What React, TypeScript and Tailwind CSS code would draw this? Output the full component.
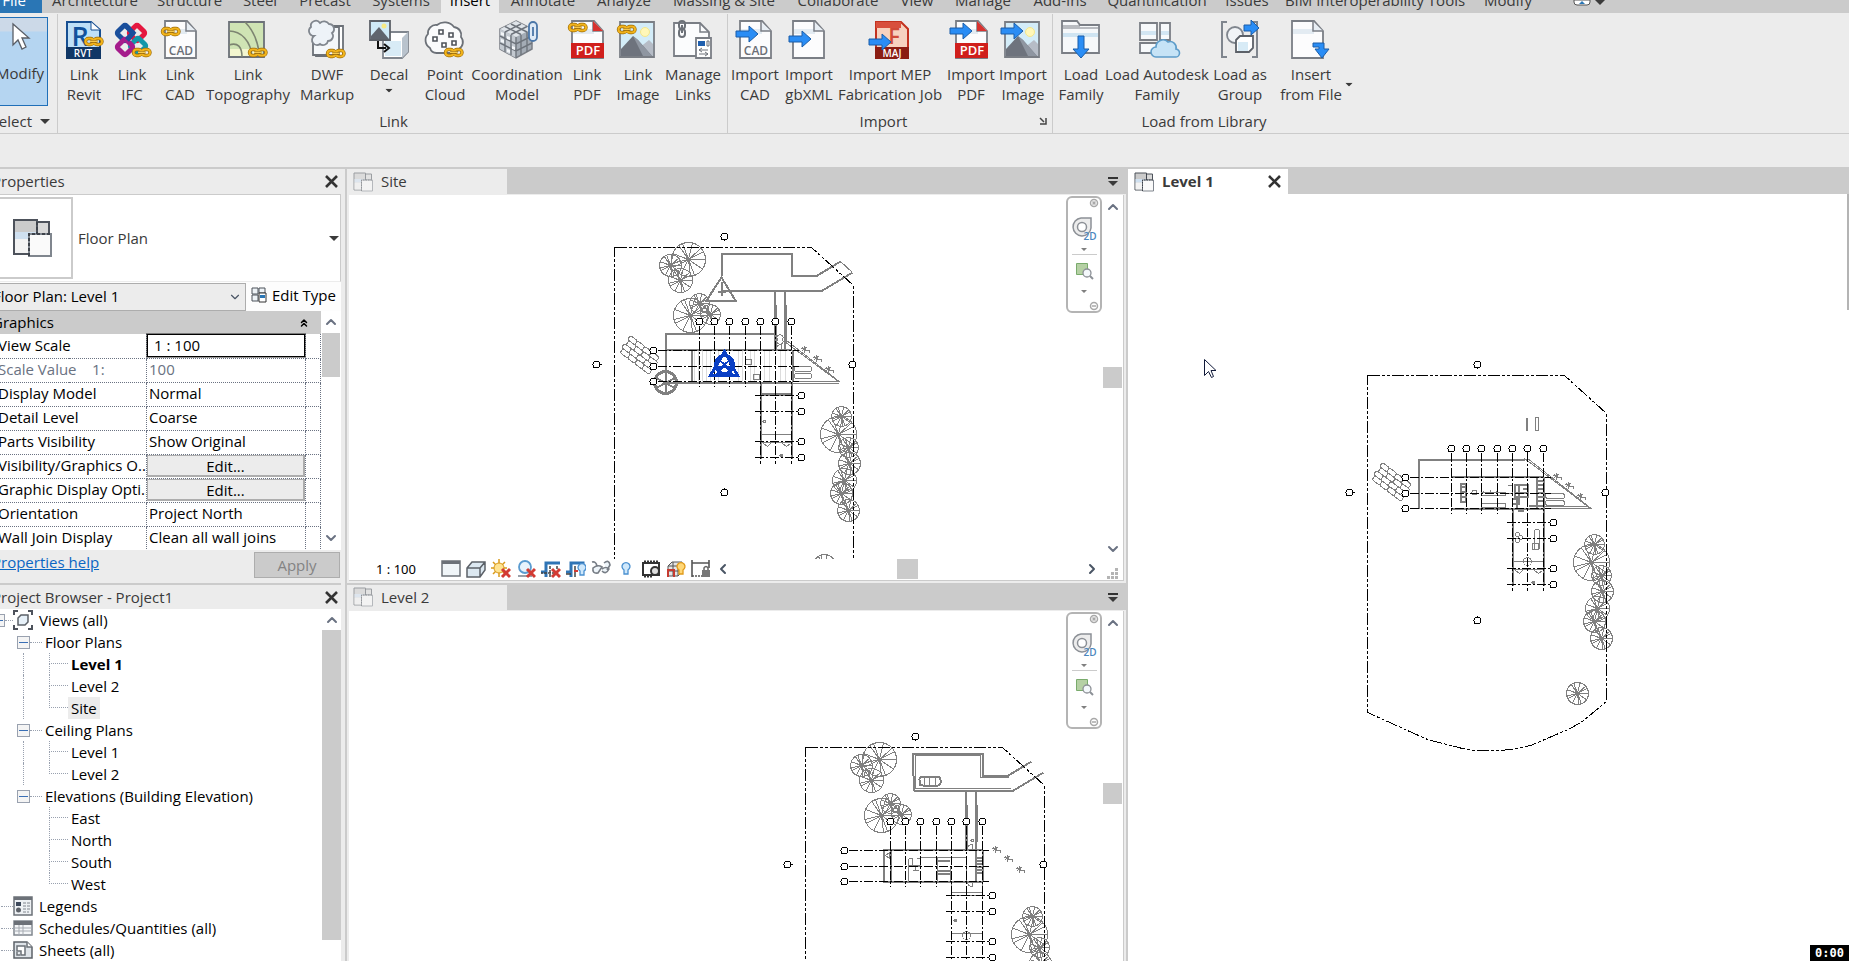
import type { ReactNode } from "react";
import { ChevronDown, ChevronLeft, ChevronRight, ChevronUp, ChevronsUp } from "lucide-react";
import { clsx } from "clsx";

/* ---------- shared icon parts ---------- */

function Caret({ className }: { className?: string }) {
  return (
    <svg viewBox="0 0 10 5" className={clsx("h-[5px] w-[10px] shrink-0", className)}>
      <path d="M0 0h10L5 5z" fill="currentColor" />
    </svg>
  );
}

function CloseIcon() {
  return (
    <svg viewBox="0 0 13 13" className="h-[13px] w-[13px]">
      <path d="M1 1l11 11M12 1L1 12" stroke="#333" strokeWidth="2.600" />
    </svg>
  );
}

function Chain({ x, y }: { x: number; y: number }) {
  return (
    <g transform={`translate(${x} ${y})`} fill="none">
      <rect x="1.5" y="1.5" width="8" height="6" rx="3" stroke="#9a6a08" strokeWidth="3.4" />
      <rect x="10" y="1.5" width="8" height="6" rx="3" stroke="#9a6a08" strokeWidth="3.4" />
      <rect x="1.5" y="1.5" width="8" height="6" rx="3" stroke="#f2b41c" strokeWidth="2" />
      <rect x="10" y="1.5" width="8" height="6" rx="3" stroke="#f2b41c" strokeWidth="2" />
      <path d="M6 4.500h7.500" stroke="#9a6a08" strokeWidth="2.600" />
      <path d="M6 4.300h7.500" stroke="#ffd45a" strokeWidth="1.200" />
    </g>
  );
}

function Arrow({ x, y, turn = 0 }: { x: number; y: number; turn?: number }) {
  return (
    <path
      transform={`translate(${x} ${y}) rotate(${turn})`}
      d="M0-3h13v-5l9 8-9 8v-5H0z"
      fill="#2a8df5"
      stroke="#1a5da8"
    />
  );
}

function Sheet({ x = 5, children }: { x?: number; children?: ReactNode }) {
  return (
    <g transform={`translate(${x} 1)`}>
      <path d="M1 1h22l9 10v27H1z" fill="#fcfcfd" stroke="#7a7e85" strokeWidth="1.800" />
      <path d="M2 9h21v5H2z" fill="#e3ebf2" />
      <path d="M22 1.500V11h10" fill="#e8eef4" stroke="#7a7e85" strokeWidth="1.500" />
      {children}
    </g>
  );
}

function IconText({ x, y, size, fill, children }: { x: number; y: number; size: number; fill: string; children: string }) {
  return (
    <text x={x} y={y} fontSize={size} fill={fill} textAnchor="middle" fontWeight="600" fontFamily="Open Sans, sans-serif">
      {children}
    </text>
  );
}

function PdfSheet() {
  return (
    <Sheet>
      <path d="M22 1v10h10z" fill="#d8322f" />
      <path d="M0 23h33v15H0z" fill="#d01f1c" />
      <IconText x={17} y={35} size={13} fill="#fff">PDF</IconText>
    </Sheet>
  );
}

function Photo() {
  return (
    <g>
      <path d="M3 3h34v35H3z" fill="#d3ecf8" stroke="#7a7e85" strokeWidth="1.800" />
      <circle cx="28" cy="13" r="4.500" fill="#fff7b8" stroke="#f4e68c" />
      <path d="M22 29l10-8 4 4v12H22z" fill="#b6bcc6" />
      <path d="M4 30l12-13 5 4 14 16H4z" fill="#6e737d" />
      <path d="M16 17l5 4 14 16h-9z" fill="#8f96a1" />
    </g>
  );
}

function Folder() {
  return (
    <g stroke="#7a7e85" strokeWidth="1.800">
      <path d="M2 34V2h15l3 4h19v28z" fill="#f6f8fa" />
      <path d="M3 9h35M2 7h18" strokeWidth="1.200" />
      <path d="M3 14h35v4H3z" fill="#cfe4f2" stroke="none" />
    </g>
  );
}

/* ---------- ribbon icons, each drawn on a 42 x 42 board ---------- */

const icons = {
  modify: <path d="M14 6v21l5-5 4 9 4-2-4-9h7z" fill="#fff" stroke="#5a5e66" strokeWidth="1.300" />,
  revit: (
    <>
      <path d="M4 3h24l9 8v28H4z" fill="#bfe0f7" stroke="#174f92" strokeWidth="2" />
      <path d="M28 3v8h9" fill="#fff" stroke="#174f92" />
      <path d="M3 28h35v12H3z" fill="#103766" />
      <IconText x={17} y={27} size={27} fill="#12529c">R</IconText>
      <IconText x={20} y={38} size={10} fill="#fff">RVT</IconText>
      <Chain x={21} y={18} />
    </>
  ),
  ifc: (
    <>
      <g fill="none" strokeWidth="5">
        <rect x="-6" y="-6" width="12" height="12" rx="2" transform="translate(14 14) rotate(45)" stroke="#1a4f9c" />
        <rect x="-6" y="-6" width="12" height="12" rx="2" transform="translate(26 14) rotate(45)" stroke="#e5173f" />
        <rect x="-6" y="-6" width="12" height="12" rx="2" transform="translate(27 27) rotate(45)" stroke="#1297a8" />
        <rect x="-6" y="-6" width="12" height="12" rx="2" transform="translate(14 28) rotate(45)" stroke="#a51c8c" />
        <path d="M14 6l8 8-6 7" stroke="#1a4f9c" />
      </g>
      <Chain x={21} y={29} />
    </>
  ),
  linkCad: (
    <>
      <Sheet>
        <IconText x={17} y={35} size={12} fill="#6b6f77">CAD</IconText>
      </Sheet>
      <Chain x={2} y={8} />
    </>
  ),
  topo: (
    <>
      <path d="M2 3h35v35H2z" fill="#cfe4b4" stroke="#6c7178" strokeWidth="1.800" />
      <path d="M3 30h30v7H3z" fill="#f3f6cf" />
      <g fill="none" stroke="#7d8571" strokeWidth="1.600">
        <path d="M2 12c12 0 22 10 23 26M18 3c6 6 12 16 14 30M2 26c9-3 13 2 13 12" />
      </g>
      <Chain x={21} y={29} />
    </>
  ),
  dwf: (
    <>
      <path d="M10 7h27v30H10z" fill="#fff" stroke="#6c7178" strokeWidth="1.800" />
      <path d="M7 8h26v28H7z" fill="#f4f7fa" stroke="#6c7178" strokeWidth="1.800" />
      <path
        d="M8 17a5 5 0 0 1-3-9 5 5 0 0 1 9-4 6 6 0 0 1 9 1 5 5 0 0 1 3 9 5 5 0 0 1-4 8 5 5 0 0 1-8 3 5 5 0 0 1-7-1 5 5 0 0 1 1-7z"
        fill="#eef3f8"
        stroke="#80868e"
        strokeWidth="1.800"
      />
      <Chain x={20} y={30} />
    </>
  ),
  decal: (
    <>
      <path d="M15 19l6-6h19v20l-6 6H15z" fill="#fff" stroke="#80868e" strokeWidth="1.800" />
      <path d="M34 19l6-6v20l-6 6z" fill="#b9c3cd" />
      <path d="M17 22h16v15H17z" fill="#d8ebf6" />
      <path d="M2 2h20v19H2z" fill="#cfeaf7" stroke="#5c6168" strokeWidth="1.800" />
      <path d="M3 17l8-9 10 12H3z" fill="#5f656e" />
      <circle cx="16" cy="7" r="2.500" fill="#f7ea84" />
      <path d="M10 22v7h8M16 25l5 4-5 4" fill="none" stroke="#111" strokeWidth="2" />
    </>
  ),
  cloud: (
    <>
      <path
        d="M6 29a9 9 0 0 1-2-14A8 8 0 0 1 13 6a12 12 0 0 1 17 2 8 8 0 0 1 7 10 8 8 0 0 1-2 12 8 8 0 0 1-9 4H13a7 7 0 0 1-7-5z"
        fill="#fafbfc"
        stroke="#6c7178"
        strokeWidth="1.800"
      />
      <g fill="#fff" stroke="#4f545b" strokeWidth="1.600">
        <path d="M15 11h4v4h-4zM25 14h4v4h-4zM9 18h4v4H9zM18 24h4v4h-4zM28 22h4v4h-4z" />
      </g>
      <Chain x={20} y={29} />
    </>
  ),
  coordination: (
    <>
      <path d="M20 2l16 8v20l-16 9L4 30V10z" fill="#a4acb5" stroke="#7a7e85" strokeWidth="1.500" />
      <path d="M20 2l16 8-16 8-16-8z" fill="#dfe4e9" />
      <path d="M20 18v21L4 30V10z" fill="#c3c9d0" />
      <g fill="none" stroke="#6e747c" strokeWidth="1.400">
        <path d="M4 17l16 8 16-8M4 24l16 8 16-8M9 13v20M15 16v20M25 16v20M31 13v20M20 18v21M9 7.500l16 8M15 5l16 8M31 7.500l-16 8M25 5L9 13" />
      </g>
      <g fill="#f2f5f8">
        <path d="M5 13l3 1v3l-3-1zM11 17l3 1v3l-3-1zM16 27l3 1v3l-3-1zM5 20l3 1v3l-3-1zM11 30l3 1v3l-3-1z" />
      </g>
      <rect x="33" y="3" width="8" height="19" rx="4" fill="#dfeaf6" stroke="#4c77a8" strokeWidth="1.800" />
      <path d="M37 8v9" stroke="#4c77a8" strokeWidth="1.800" />
    </>
  ),
  linkPdf: (
    <>
      <PdfSheet />
      <Chain x={2} y={4} />
    </>
  ),
  linkImage: (
    <>
      <Photo />
      <Chain x={0} y={6} />
    </>
  ),
  manage: (
    <>
      <path d="M2 4h26l9 9v24H2z" fill="#fbfcfd" stroke="#7a7e85" strokeWidth="1.800" />
      <path d="M28 4v9h9" fill="none" stroke="#7a7e85" strokeWidth="1.500" />
      <g fill="none" stroke="#6c7178" strokeWidth="2">
        <rect x="7" y="2" width="6" height="8" rx="3" />
        <rect x="7" y="10" width="6" height="8" rx="3" />
        <path d="M10 6v8" />
      </g>
      <path d="M24 19h15v20H24z" fill="#fff" stroke="#7a7e85" strokeWidth="1.800" />
      <path d="M26 22h7v5h-7z" fill="#1f5fae" />
      <path d="M35 22h2v5h-2zM27 31h9M27 35h9M30 29l-3 2 3 2M33 33l3 2-3 2" fill="none" stroke="#6c7178" />
    </>
  ),
  importCad: (
    <>
      <Sheet>
        <IconText x={17} y={35} size={12} fill="#6b6f77">CAD</IconText>
      </Sheet>
      <Arrow x={2} y={15} />
    </>
  ),
  importXml: (
    <>
      <Sheet x={4} />
      <Arrow x={1} y={20} />
    </>
  ),
  importMep: (
    <>
      <path d="M7 3h25l7 7v29H7z" fill="#f7d2bf" stroke="#c3321f" strokeWidth="2" />
      <path d="M7 3h25v6H7z" fill="#d8503d" />
      <IconText x={25} y={25} size={22} fill="#d04a38">F</IconText>
      <path d="M6 28h34v12H6z" fill="#8b1d12" />
      <IconText x={23} y={38} size={10} fill="#fff">MAJ</IconText>
      <Arrow x={0} y={23} />
    </>
  ),
  importPdf: (
    <>
      <PdfSheet />
      <Arrow x={0} y={12} />
    </>
  ),
  importImage: (
    <>
      <Photo />
      <Arrow x={-1} y={12} />
    </>
  ),
  loadFamily: (
    <>
      <Folder />
      <Arrow x={21} y={17} turn={90} />
    </>
  ),
  loadAutodesk: (
    <>
      <g fill="#f7f9fb" stroke="#7a7e85" strokeWidth="1.800">
        <path d="M4 4h17v17H4zM24 4h10v17H24zM4 24h17v10H4z" />
      </g>
      <path d="M5 12h15v4H5zM25 12h8v4h-8z" fill="#d3e6f3" />
      <path
        d="M20 38a5 5 0 0 1 0-10 7 7 0 0 1 12-5 6 6 0 0 1 8 7 4 4 0 0 1-1 8z"
        fill="#c6e3f6"
        stroke="#5d9cc9"
        strokeWidth="1.600"
      />
    </>
  ),
  loadGroup: (
    <>
      <g fill="none" stroke="#80868e" strokeWidth="2">
        <path d="M8 3H3v35h5M33 3h5v35h-5" />
      </g>
      <circle cx="16" cy="16" r="8" fill="#f1f4f7" stroke="#80868e" strokeWidth="1.800" />
      <path d="M17 21l4-4h13v12l-4 4H17z" fill="#fff" stroke="#5c6168" strokeWidth="1.800" />
      <path d="M19 23h10v9H19z" fill="#d8ebf6" />
      <path d="M25 6h7V1l8 8-8 7v-4h-7z" fill="#2a8df5" stroke="#1a5da8" />
    </>
  ),
  insertFile: (
    <>
      <Sheet x={1} />
      <path d="M23 24h11v6h5l-7 9-7-9h4v-2h-6z" fill="#2a8df5" stroke="#1a5da8" />
    </>
  ),
};

type IconName = keyof typeof icons;

interface Tool {
  icon: IconName;
  lines: string[];
  width: string;
}

const linkTools: Tool[] = [
  { icon: "revit", lines: ["Link", "Revit"], width: "w-[48px]" },
  { icon: "ifc", lines: ["Link", "IFC"], width: "w-[48px]" },
  { icon: "linkCad", lines: ["Link", "CAD"], width: "w-[48px]" },
  { icon: "topo", lines: ["Link", "Topography"], width: "w-[88px]" },
  { icon: "dwf", lines: ["DWF", "Markup"], width: "w-[70px]" },
  { icon: "decal", lines: ["Decal"], width: "w-[54px]" },
  { icon: "cloud", lines: ["Point", "Cloud"], width: "w-[58px]" },
  { icon: "coordination", lines: ["Coordination", "Model"], width: "w-[86px]" },
  { icon: "linkPdf", lines: ["Link", "PDF"], width: "w-[54px]" },
  { icon: "linkImage", lines: ["Link", "Image"], width: "w-[48px]" },
  { icon: "manage", lines: ["Manage", "Links"], width: "w-[62px]" },
];

const importTools: Tool[] = [
  { icon: "importCad", lines: ["Import", "CAD"], width: "w-[54px]" },
  { icon: "importXml", lines: ["Import", "gbXML"], width: "w-[54px]" },
  { icon: "importMep", lines: ["Import MEP", "Fabrication Job"], width: "w-[108px]" },
  { icon: "importPdf", lines: ["Import", "PDF"], width: "w-[54px]" },
  { icon: "importImage", lines: ["Import", "Image"], width: "w-[50px]" },
];

const libraryTools: Tool[] = [
  { icon: "loadFamily", lines: ["Load", "Family"], width: "w-[48px]" },
  { icon: "loadAutodesk", lines: ["Load Autodesk", "Family"], width: "w-[104px]" },
  { icon: "loadGroup", lines: ["Load as", "Group"], width: "w-[62px]" },
  { icon: "insertFile", lines: ["Insert", "from File"], width: "w-[80px]" },
];

const tabs = [
  { name: "Architecture", width: "w-[106px]" },
  { name: "Structure", width: "w-[83px]" },
  { name: "Steel", width: "w-[58px]" },
  { name: "Precast", width: "w-[72px]" },
  { name: "Systems", width: "w-[80px]" },
  { name: "Insert", width: "w-[58px]" },
  { name: "Annotate", width: "w-[88px]" },
  { name: "Analyze", width: "w-[74px]" },
  { name: "Massing & Site", width: "w-[126px]" },
  { name: "Collaborate", width: "w-[102px]" },
  { name: "View", width: "w-[56px]" },
  { name: "Manage", width: "w-[76px]" },
  { name: "Add-Ins", width: "w-[78px]" },
  { name: "Quantification", width: "w-[116px]" },
  { name: "Issues", width: "w-[64px]" },
  { name: "BIM Interoperability Tools", width: "w-[192px]" },
  { name: "Modify", width: "w-[74px]" },
];

function TabStrip() {
  return (
    <nav className="flex h-[13px] shrink-0 items-end overflow-hidden bg-[#cbcbcb] text-[15px]">
      <button className="w-[42px] shrink-0 bg-[#2a76b5] pb-[3px] pr-4 text-right leading-5 text-white">File</button>
      {tabs.map((tab) => (
        <button
          key={tab.name}
          className={clsx(
            "shrink-0 whitespace-nowrap pb-[3px] text-center leading-5",
            tab.width,
            tab.name === "Insert" && "bg-[#ececec] text-black",
          )}
        >
          {tab.name}
        </button>
      ))}
      <span className="ml-7 flex h-[13px] items-start gap-1">
        <svg viewBox="0 0 18 6" className="h-[6px] w-[18px]">
          <path d="M1 0v2q0 3 3 3h10q3 0 3-3V0z" fill="#fff" stroke="#555" />
          <path d="M6 4l3-3 3 3z" fill="#2a76b5" />
        </svg>
        <Caret />
      </span>
    </nav>
  );
}

function ToolButton({ tool }: { tool: Tool }) {
  return (
    <button className={clsx("flex shrink-0 flex-col items-center pt-[5px] leading-5", tool.width)}>
      <svg viewBox="0 0 42 42" className="mb-[3px] h-[42px] w-[42px] overflow-visible">
        {icons[tool.icon]}
      </svg>
      <span className="flex items-center whitespace-nowrap">
        <span>
          {tool.lines.map((line) => (
            <span key={line} className="block">{line}</span>
          ))}
        </span>
        {tool.icon === "insertFile" && <Caret className="-mr-3 ml-[2px] scale-75" />}
      </span>
      {tool.icon === "decal" && <Caret className="mt-1 scale-75" />}
    </button>
  );
}

function ToolGroup({ name, tools, launcher, className }: { name: string; tools: Tool[]; launcher?: boolean; className?: string }) {
  return (
    <section className={clsx("flex flex-col justify-between", className)}>
      <div className="flex">
        {tools.map((tool) => (
          <ToolButton key={tool.icon} tool={tool} />
        ))}
      </div>
      <div className="flex h-[24px] items-center">
        <h2 className="flex-1 text-center leading-5">{name}</h2>
        {launcher && (
          <svg viewBox="0 0 8 8" className="mr-[5px] h-2 w-2">
            <path d="M1 1l4 4M7 1v6H1" fill="none" stroke="#444" strokeWidth="1.500" />
          </svg>
        )}
      </div>
    </section>
  );
}

function Ribbon() {
  return (
    <div className="border-b border-[#cbcbcb] pt-px">
      <div className="flex h-[119px] text-[15px] text-[#3a3a3a]">
        <section className="-ml-2 flex w-[66px] flex-col justify-between border-r border-[#cbcbcb]">
          <button className="mt-[3px] flex h-[89px] w-[56px] flex-col items-center border border-[#1f6fb8] bg-linear-to-b from-[#ccd9e8] from-15% to-[#b5d5f1] to-16% leading-5">
            <svg viewBox="0 0 42 42" className="mb-[3px] h-[42px] w-[42px]">
              {icons.modify}
            </svg>
            Modify
          </button>
          <div className="flex h-[24px] items-center justify-end gap-2 pr-[7px]">
            Select <Caret />
          </div>
        </section>
        <ToolGroup name="Link" tools={linkTools} className="w-[670px] border-r border-[#cbcbcb] pl-[2px]" />
        <ToolGroup name="Import" tools={importTools} launcher className="w-[325px] border-r border-[#cbcbcb]" />
        <ToolGroup name="Load from Library" tools={libraryTools} className="pl-[4px]" />
      </div>
    </div>
  );
}

/* ---------- left palettes ---------- */

function PlanIcon({ className, faded }: { className: string; faded?: boolean }) {
  return (
    <svg viewBox="0 0 40 40" className={clsx("shrink-0", className, faded && "opacity-50")}>
      <path d="M2 2h23v34H2z" fill="#cbcbcb" stroke="#4d525b" strokeWidth="2" />
      <path d="M3 14h21v7H3z" fill="#cfe0f0" />
      <path d="M3 21h21v14H3z" fill="#f3f3f3" />
      <path d="M25 4h12v12H25z" fill="#d9d9d9" stroke="#4d525b" strokeWidth="2" />
      <path d="M17 16h22v22H17z" fill="#fafafa" stroke="#80868e" strokeWidth="2" />
      <path d="M17 38V16h22M25 4v12" fill="none" stroke="#3d424a" strokeWidth="2" strokeDasharray="3 2" />
    </svg>
  );
}

function PanelHeader({ title, className }: { title: string; className?: string }) {
  return (
    <header className={clsx("flex shrink-0 items-center justify-between pr-[3px] text-[#3a3a3a]", className)}>
      <h2>{title}</h2>
      <button aria-label={`Close ${title}`}>
        <CloseIcon />
      </button>
    </header>
  );
}

const properties = [
  { name: "View Scale", value: "1 : 100", kind: "input" },
  { name: "Scale Value    1:", value: "100", kind: "muted" },
  { name: "Display Model", value: "Normal", kind: "text" },
  { name: "Detail Level", value: "Coarse", kind: "text" },
  { name: "Parts Visibility", value: "Show Original", kind: "text" },
  { name: "Visibility/Graphics O...", value: "Edit...", kind: "button" },
  { name: "Graphic Display Opti...", value: "Edit...", kind: "button" },
  { name: "Orientation", value: "Project North", kind: "text" },
  { name: "Wall Join Display", value: "Clean all wall joins", kind: "text" },
];

function PropertyValue({ name, value, kind }: { name: string; value: string; kind: string }) {
  if (kind === "input")
    return (
      <input
        aria-label={name}
        defaultValue={value}
        className="block h-[23px] w-full border border-black bg-white px-[6px] pb-[2px] outline-1 outline-black/40"
      />
    );
  if (kind === "button")
    return (
      <button aria-label={`Edit ${name}`} className="block h-[22px] w-full border border-r-2 border-b-2 border-[#adadad] bg-[#ececec] leading-[18px]">
        {value}
      </button>
    );
  return <span className="block px-[2px]">{value}</span>;
}

function Properties() {
  return (
    <section className="flex flex-col">
      <PanelHeader title="Properties" className="h-[25px]" />
      <div className="flex h-[88px] items-center border-y border-r border-[#cbcbcb] border-b-[#ececec] bg-white text-[#3a3a3a]">
        <div className="flex h-[82px] w-[81px] items-center justify-center border-2 border-l-0 border-[#cbcbcb]">
          <PlanIcon className="h-[40px] w-[40px]" />
        </div>
        <span className="flex-1 pl-[5px]">Floor Plan</span>
        <Caret className="mr-px" />
      </div>
      <div className="flex h-[29px] items-center bg-[#fdfdfd]">
        <div className="relative h-[28px] w-[254px]">
          <select aria-label="Instance" className="h-full w-full appearance-none border border-[#adadad] bg-[#ececec] pl-0">
            <option>Floor Plan: Level 1</option>
          </select>
          <ChevronDown size={14} className="absolute top-[7px] right-1 text-gray-600" />
        </div>
        <button className="flex items-center gap-[5px] pb-[3px] pl-[5px]">
          <svg viewBox="0 0 16 16" className="h-4 w-4">
            <path d="M1 1h6v6H1zM8 1h6v5H8zM1 8h6v6H1z" fill="#eef3f7" stroke="#4d525b" />
            <path d="M8 6h7v9H8z" fill="#fff" stroke="#333" />
            <path d="M9 8h5v3H9z" fill="#2a76b5" />
          </svg>
          Edit Type
        </button>
      </div>
      <div className="flex h-[239px] overflow-hidden bg-white">
        <table className="h-[239px] w-[329px] table-fixed border-collapse">
          <thead>
            <tr className="h-[23px] bg-[#cbcbcb] text-left leading-[20px]">
              <th colSpan={2} className="pb-[2px] font-normal">Graphics</th>
              <th className="w-[159px]" />
              <th className="w-[15px]">
                <ChevronsUp size={12} strokeWidth={3} className="-ml-2" />
              </th>
            </tr>
          </thead>
          <tbody>
            {properties.map((row) => (
              <tr key={row.name} className={clsx("h-[24px] leading-[20px]", row.kind === "muted" && "text-gray-500")}>
                <th
                  colSpan={2}
                  className="overflow-hidden border-r border-b border-dotted border-gray-500 pb-[2px] pl-[6px] text-left font-normal whitespace-pre"
                >
                  {row.name}
                </th>
                <td className={clsx("border-r border-b border-dotted border-gray-500", row.kind === "text" || row.kind === "muted" ? "pb-[2px]" : "p-0")}>
                  <PropertyValue {...row} />
                </td>
                <td className="border-r border-b border-dotted border-gray-500" />
              </tr>
            ))}
          </tbody>
        </table>
        <div className="flex w-[20px] flex-col items-center pt-[3px] pb-1">
          <ChevronUp size={16} strokeWidth={3} className="text-gray-500" />
          <div className="mt-[3px] mb-auto h-[44px] w-[18px] bg-[#cbcbcb]" />
          <ChevronDown size={16} strokeWidth={3} className="text-gray-500" />
        </div>
      </div>
      <footer className="flex h-[33px] items-start justify-between pr-px">
        <a href="#help" className="pt-px text-[#0b66c3] underline">Properties help</a>
        <button disabled className="mt-[2px] h-[26px] w-[86px] border border-[#adadad] bg-[#cbcbcb] text-[#838383]">
          Apply
        </button>
      </footer>
    </section>
  );
}

const viewGroups = [
  { name: "Floor Plans", views: ["Level 1", "Level 2", "Site"] },
  { name: "Ceiling Plans", views: ["Level 1", "Level 2"] },
  { name: "Elevations (Building Elevation)", views: ["East", "North", "South", "West"] },
];

function Expander() {
  return (
    <button aria-label="Collapse" className="flex h-[13px] w-[13px] shrink-0 items-center justify-center border border-gray-400 bg-[#f4f4f4]">
      <span className="h-px w-[9px] bg-[#3a6fb5]" />
    </button>
  );
}

function Dots({ className }: { className: string }) {
  return <span className={clsx("shrink-0 border-t border-dotted border-gray-400", className)} />;
}

const treeIcons = {
  views: (
    <>
      <path d="M1 5V1h4M15 1h4v4M1 15v4h4M15 19h4v-4" fill="none" stroke="#4d525b" strokeWidth="2" />
      <path d="M5 8l3-3h7v7l-3 3H5z" fill="#e7f1f9" stroke="#5c6168" strokeWidth="1.500" />
    </>
  ),
  legends: (
    <>
      <path d="M1 1h18v18H1z" fill="#eef1f4" stroke="#6c7178" strokeWidth="1.500" />
      <path d="M1 1h18v3H1z" fill="#6c7178" />
      <path d="M3 6h5v4H3z" fill="#3f4a5c" />
      <circle cx="5.500" cy="14" r="2.500" fill="#5c6168" />
      <path d="M10 7h7M10 10h7M10 13h7M10 16h6" stroke="#80868e" strokeDasharray="3 1" />
    </>
  ),
  schedules: (
    <>
      <path d="M1 3h18v14H1z" fill="#f4f6f8" stroke="#80868e" strokeWidth="1.500" />
      <path d="M1 3h18v4H1z" fill="#6c7178" />
      <path d="M1 10h18M1 13h18M6 7v10M10 7v10" stroke="#a6abb2" />
    </>
  ),
  sheets: (
    <>
      <path d="M1 2h13l5 5v11H1z" fill="#dfe4e9" stroke="#5c6168" strokeWidth="1.500" />
      <path d="M14 2v5h5M4 6h8v9H8v-4H4zM4 12v3h3" fill="#fff" stroke="#6c7178" strokeWidth="1.500" />
    </>
  ),
};

function TreeIcon({ name }: { name: keyof typeof treeIcons }) {
  return (
    <svg viewBox="0 0 20 20" className="mr-[6px] h-5 w-5 shrink-0">
      {treeIcons[name]}
    </svg>
  );
}

function ProjectBrowser() {
  return (
    <section className="flex min-h-0 flex-1 flex-col border-t-2 border-[#cbcbcb]">
      <PanelHeader title="Project Browser - Project1" className="h-[24px]" />
      <div className="flex min-h-0 flex-1 bg-white">
        <ul className="min-w-0 flex-1 overflow-hidden leading-[22px] whitespace-nowrap text-black">
          <li>
            <div className="flex h-[22px] items-center">
              <Expander />
              <Dots className="w-[8px]" />
              <TreeIcon name="views" />
              Views (all)
            </div>
            <ul>
              {viewGroups.map((group, g) => (
                <li key={group.name}>
                  <div className="flex h-[22px] items-center pl-[25px]">
                    <Expander />
                    <Dots className="mr-[3px] w-[12px]" />
                    {group.name}
                  </div>
                  <ul>
                    {group.views.map((view, i) => (
                      <li key={view} className="flex h-[22px] items-stretch pl-[31px]">
                        <span className={clsx("w-[26px] border-dotted border-gray-400", g < 2 && "border-l")} />
                        <span className="flex w-[19px] flex-col">
                          <span className="h-1/2 border-b border-l border-dotted border-gray-400" />
                          <span
                            className={clsx("h-1/2 border-dotted border-gray-400", i < group.views.length - 1 && "border-l")}
                          />
                        </span>
                        <span
                          className={clsx(
                            "px-[3px]",
                            view === "Site" && "bg-[#ececec]",
                            g === 0 && i === 0 && "font-bold",
                          )}
                        >
                          {view}
                        </span>
                      </li>
                    ))}
                  </ul>
                </li>
              ))}
            </ul>
          </li>
          <li className="flex h-[22px] items-center pl-[9px]">
            <Dots className="w-[12px]" />
            <TreeIcon name="legends" />
            Legends
          </li>
          <li className="flex h-[22px] items-center pl-[9px]">
            <Dots className="w-[12px]" />
            <TreeIcon name="schedules" />
            Schedules/Quantities (all)
          </li>
          <li className="flex h-[22px] items-center pl-[9px]">
            <Dots className="w-[12px]" />
            <TreeIcon name="sheets" />
            Sheets (all)
          </li>
        </ul>
        <div className="flex w-[19px] flex-col items-center pt-[3px] pb-[21px]">
          <ChevronUp size={16} strokeWidth={3} className="mb-[2px] shrink-0 text-gray-500" />
          <div className="w-full flex-1 bg-[#cbcbcb]" />
        </div>
      </div>
    </section>
  );
}

/* ---------- plan drawings, origin at the top left corner of the site boundary ---------- */

function Tree({ x, y, r }: { x: number; y: number; r: number }) {
  const spokes = Array.from({ length: 13 }, (_, i) => {
    const angle = (i / 13) * Math.PI * 2 + (i % 3) * 0.12;
    return `M${x} ${y}L${x + Math.cos(angle) * r} ${y + Math.sin(angle) * r}`;
  });
  return (
    <>
      <circle cx={x} cy={y} r={r} />
      <path d={spokes.join("")} />
    </>
  );
}

function Trees({ list }: { list: number[][] }) {
  return (
    <g fill="none" stroke="#808080">
      {list.map(([x, y, r]) => (
        <Tree key={`${x}-${y}`} x={x} y={y} r={r} />
      ))}
    </g>
  );
}

const northTrees = [[74, 12, 17], [56, 18, 11], [66, 33, 12], [76, 68, 17], [85, 56, 10], [96, 67, 10]];
const eastTrees = [[227, 169, 10], [224, 187, 18], [234, 200, 10], [235, 216, 11], [230, 233, 12], [227, 246, 11], [234, 263, 11]];

function Boundary() {
  return (
    <path
      d="M0 0H197L239 38V326L216 345 203 353 163 370Q126 379 95 373L60 364 0 337z"
      fill="none"
      stroke="#000"
      strokeDasharray="12 2 3 2 3 2"
    />
  );
}

function Markers() {
  return (
    <g>
      {[[110, -11, 90], [-18, 117, 0], [238, 117, 180], [110, 245, -90]].map(([x, y, turn]) => (
        <g key={`${x}-${y}`} transform={`translate(${x} ${y}) rotate(${turn})`}>
          <path d="M0-4l5 4-5 4z" fill="#000" />
          <circle r="3.500" fill="#fff" stroke="#000" />
        </g>
      ))}
    </g>
  );
}

function Grids() {
  const columns = [85, 100, 115, 131, 146, 161, 177];
  const rows = [103, 119, 134];
  const wing = [148, 164, 194, 210];
  return (
    <g stroke="#000" fill="#fff">
      <g strokeDasharray="9 2 2 2">
        {columns.map((x, i) => (
          <path key={x} d={`M${x} 78V${i < 4 ? 139 : 216}`} />
        ))}
        {rows.map((y) => (
          <path key={y} d={`M43 ${y}H184`} />
        ))}
        {wing.map((y) => (
          <path key={y} d={`M140 ${y}H184`} />
        ))}
      </g>
      {columns.map((x) => (
        <circle key={x} cx={x} cy="74" r="3.500" />
      ))}
      {rows.map((y) => (
        <circle key={y} cx="39" cy={y} r="3.500" />
      ))}
      {wing.map((y) => (
        <circle key={y} cx="187" cy={y} r="3.500" />
      ))}
    </g>
  );
}

function People() {
  return (
    <g fill="none" stroke="#808080">
      {[[190, 102], [202, 111], [214, 122]].map(([x, y]) => (
        <path key={x} transform={`translate(${x} ${y})`} d="M-4-1h5M0-4v7M-2-2l5 4M3-3L-2 1M1 1h4v2" />
      ))}
    </g>
  );
}

function Parking() {
  const bays = [];
  for (let row = 0; row < 4; row++)
    for (let i = 0; i < 4; i++)
      bays.push(<rect key={`${row}${i}`} x={i * 9 + (row % 2) * 2} y={row * 5} width="9" height="5" rx="2" />);
  return (
    <g transform="translate(16 88) rotate(37)" fill="none" stroke="#808080">
      {bays}
    </g>
  );
}

function Road() {
  return (
    <g fill="none" stroke="#808080">
      <path d="M107 28V6H177V28H203L226 14M108 43H208L238 25" strokeWidth="2" />
      <path d="M160 43V102M170 43V102" strokeWidth="2" />
      <path d="M162 57V102M172 57V94" />
    </g>
  );
}

function Deck() {
  return (
    <g fill="none" stroke="#808080">
      <path d="M170 94L224 134H177M172 93L226 135" />
      <path d="M177 136H224" />
      <rect x="180" y="119" width="17" height="5" rx="2" />
      <rect x="180" y="126" width="17" height="5" rx="2" />
    </g>
  );
}

function Wing() {
  return (
    <g fill="none" stroke="#808080">
      <path d="M146 134V211M177 134V211" strokeWidth="2" />
      <path d="M146 187H177M146 195H177M149 196l4 3 3-3M168 196l4 3 4-3" />
      <circle cx="167" cy="208" r="1.500" fill="#808080" />
    </g>
  );
}

function SitePlan() {
  return (
    <g>
      <Trees list={[...northTrees, ...eastTrees, [210, 318, 11]]} />
      <Road />
      <path d="M226 14L238 25" stroke="#808080" />
      <path d="M107 30L121 53H92zM103 44h8M107 34v14" fill="none" stroke="#808080" strokeWidth="2" />
      <Parking />
      <Deck />
      <g fill="none" stroke="#808080">
        <path d="M80 103V134M84 103V134M88 103V134M92 103V134M96 103V134M104 103V134M124 103V134M128 103V134M136 103V134M140 103V134M150 103V134M155 103V134M166 103V134M171 103V134" stroke="#dcdcdc" />
        <path d="M51 134V86H160M51 102H177M51 135H177M77 102V134M178 102V134" strokeWidth="2" />
        <path d="M131 112h6v5h-6zM139 127h6v5h-6zM146 146H177M163 92a3 3 0 1 1 5 0 3 3 0 1 1-5 0M162 102q0-5 5-5v5" />
        <path d="M146 147H177" strokeWidth="2" />
        <circle cx="150" cy="174" r="1.500" />
        <g strokeWidth="3">
          <circle cx="51" cy="135" r="11" />
          <path d="M51 124V146M41 130L61 141M41 141L61 130" strokeWidth="2" />
        </g>
      </g>
      <Wing />
      <People />
      <Grids />
      <g fill="none" stroke="#0a3fc4" strokeWidth="3">
        <path d="M110 104L123 128H96z" />
        <circle cx="110" cy="117" r="9" />
        <path d="M100 119H120M102 127L110 118 118 127M104 112L116 122M116 112L104 122" strokeWidth="2" />
      </g>
      <Boundary />
      <Markers />
    </g>
  );
}

function Level1Plan() {
  return (
    <g>
      <Trees list={[...eastTrees, [210, 318, 11]]} />
      <g transform="translate(-1 -1)">
        <Parking />
        <g fill="none" stroke="#808080">
          <path d="M52 134V85H158" strokeWidth="2" />
          <path d="M158 84L224 134H177M161 84L226 135M177 132H220" />
          <path d="M160 43V56" strokeWidth="2" />
          <path d="M169 43h3v13h-3zM180 119h17q2 3 0 5h-17q-2-3 0-5M180 126h17q2 3 0 5h-17q-2-3 0-5" />
          <path d="M85 102H177M85 134H177" strokeWidth="2" />
          <path d="M94 109h5v18h-5zM93 112h7M93 117h7M93 122h7" strokeWidth="2" />
          <circle cx="108" cy="118" r="2.500" />
          <path d="M115 118h24v3h-24zM115 129h24v4h-24zM117 118v-2M124 118v-3M130 118v-2M141 111h5v8h-5" />
          <path d="M148 110h13v12h-13zM152 110v16M156 114h5M148 118h12M150 124v9M146 124h6v5h-6M151 136h6" strokeWidth="2" />
          <path d="M170 102V134M177 102V134M170 106h7M170 110h7M170 114h7M170 118h7M170 122h7M170 126h7M162 131H177" strokeWidth="2" />
          <circle cx="151" cy="160" r="2" />
          <circle cx="154" cy="163" r="2" />
          <circle cx="151" cy="166" r="2" />
          <rect x="168" y="155" width="5" height="20" rx="2" />
          <path d="M166 169h6v6h-6z" />
          <circle cx="161" cy="187" r="4" />
        </g>
        <Wing />
        <People />
        <Grids />
      </g>
      <Boundary />
      <Markers />
    </g>
  );
}

function Level2Plan() {
  return (
    <g>
      <Trees list={[...northTrees, ...eastTrees]} />
      <Road />
      <g fill="none" stroke="#808080">
        <path d="M108 28V43" strokeWidth="2" />
        <path d="M110 7V41H205M110 8H175V30H203" />
        <rect x="114" y="29" width="21" height="9" rx="3" strokeWidth="2" />
        <path d="M119 30v7M124 30v7M130 30v7" />
        <path d="M77 102H177M77 134H177M78 102V134M85 102V134" strokeWidth="2" />
        <path d="M103 111h4v8h8v-8h-4M103 111v22M107 123h6M110 119v4M115 110H161V134M132 110v24M145 119v15" />
        <path d="M103 118h12M131 113h13M131 123h14M131 126h14" strokeWidth="2" />
        <path d="M170 102V134M177 102V134M171 110h6M171 113h6M171 116h6M171 119h6M171 122h6M171 125h6" strokeWidth="2" />
        <path d="M162 102q0-5 5-5v5M162 134q0 5 5 5v-5M146 145H177M146 148H177" />
        <circle cx="167" cy="93" r="1.500" />
        <circle cx="150" cy="173" r="1.500" fill="#808080" />
        <path d="M80 108l4-3v6z" />
        <circle cx="161" cy="188" r="4" />
        <path d="M177 134V150M146 134V150M146 186H177" />
      </g>
      <People />
      <Grids />
      <Boundary />
      <Markers />
    </g>
  );
}

/* ---------- view panes ---------- */

function Canvas({ label, origin, children, overlay }: { label: string; origin: string; children: ReactNode; overlay?: ReactNode }) {
  return (
    <div className="relative min-w-0 flex-1 overflow-hidden bg-white">
      <svg aria-label={label} className="absolute inset-0 h-full w-full" shapeRendering="crispEdges">
        <g transform={origin}>{children}</g>
      </svg>
      {overlay}
    </div>
  );
}

function NavigationBar() {
  return (
    <div className="absolute top-px right-px flex h-[117px] w-[36px] flex-col items-center rounded-md border-2 border-[#b4b4b4] bg-white text-gray-500">
      <svg viewBox="0 0 32 113" className="h-[113px] w-[32px]">
        <g fill="#fff" stroke="#a8a8a8" strokeWidth="1.500">
          <circle cx="26" cy="5" r="3.500" />
          <path d="M24.500 3.500l3 3M27.500 3.500l-3 3" />
          <circle cx="26" cy="108" r="3.500" />
          <path d="M24 108h4" />
        </g>
        <path d="M13 20h10v10a9 9 0 1 1-10-10z" fill="#ececec" stroke="#8c9096" strokeWidth="1.500" />
        <circle cx="14" cy="29" r="4.500" fill="#fff" stroke="#8c9096" strokeWidth="1.500" />
        <text x="22" y="42" fontSize="10" fill="#4a86bd" textAnchor="middle" fontWeight="600" fontFamily="Open Sans, sans-serif">2D</text>
        <path d="M13 50h6l-3 3zM13 92h6l-3 3z" fill="#808080" />
        <path d="M4 56.500h25" stroke="#cbcbcb" />
        <path d="M8.500 65.500h11v11h-11z" fill="#b5d0a4" stroke="#79ab6c" />
        <circle cx="19" cy="75" r="4" fill="#f4f8fb" stroke="#8c9096" strokeWidth="1.300" />
        <path d="M22 78l3 3" stroke="#8c9096" strokeWidth="2" />
      </svg>
    </div>
  );
}

function PaneTabs({ title, active }: { title: string; active?: boolean }) {
  return (
    <header className="flex h-[25px] shrink-0 items-center justify-between bg-[#cbcbcb] pr-[8px]">
      <div
        className={clsx(
          "flex h-full w-[160px] items-center gap-[8px] pl-[6px]",
          active ? "bg-white font-bold" : "bg-[#ececec]",
        )}
      >
        <PlanIcon className="h-[20px] w-[20px]" faded={!active} />
        <span className="flex-1">{title}</span>
        {active && (
          <button aria-label={`Close ${title}`} className="pr-[7px]">
            <CloseIcon />
          </button>
        )}
      </div>
      {!active && (
        <button aria-label="Open views" className="flex flex-col gap-[2px]">
          <span className="h-[2px] w-[10px] bg-[#333]" />
          <Caret />
        </button>
      )}
    </header>
  );
}

function ScrollColumn({ end, thumb }: { end?: boolean; thumb: string }) {
  return (
    <div className="flex w-[20px] shrink-0 flex-col items-center bg-white pt-[4px] pr-px">
      <ChevronUp size={16} strokeWidth={3} className="text-gray-500" />
      <div className={clsx("h-[21px] w-full bg-[#cbcbcb]", thumb)} />
      {end && <ChevronDown size={16} strokeWidth={3} className="mt-auto mb-[2px] text-gray-500" />}
    </div>
  );
}

const bulb = (x: number, y: number, fill: string, stroke: string) => (
  <path d={`M${x} ${y}a4 4 0 1 1 4 0v4h-4z`} fill={fill} stroke={stroke} strokeWidth="1.300" />
);

const redCross = <path d="M11 10l8 8M19 10l-8 8" stroke="#d23b33" strokeWidth="3" />;

const viewControls: { name: string; art: ReactNode }[] = [
  { name: "Detail level", art: <><path d="M1 2h18v15H1z" fill="#f0f5f8" stroke="#6c7178" strokeWidth="1.500" /><path d="M1 2h18v3H1z" fill="#6c7178" /></> },
  { name: "Visual style", art: <path d="M1 9l5-6h13v8l-5 7H1zM1 9h13v9M14 9l5-6" fill="#dce8f1" stroke="#5c6168" strokeWidth="1.500" /> },
  { name: "Sun path", art: <><path d="M8 0v18M0 9h16M2 3l12 12M14 3L2 15" stroke="#d99a1a" strokeWidth="1.500" /><circle cx="8" cy="9" r="5" fill="#ffe391" stroke="#d99a1a" />{redCross}</> },
  { name: "Shadows", art: <><path d="M2 16h14v2H2z" fill="#9aa0a8" /><circle cx="9" cy="8" r="6" fill="#e7f3fc" stroke="#5a9bd0" strokeWidth="1.800" />{redCross}</> },
  { name: "Crop view", art: <><path d="M5 18V4h14M0 13h5" fill="none" stroke="#2f74b5" strokeWidth="3" /><path d="M3 14h13M9 7v11M16 7v4M0 14h2" stroke="#444" strokeWidth="1.500" strokeDasharray="3 1" />{redCross}</> },
  { name: "Show crop region", art: <><path d="M5 18V4h12v4M0 13h5" fill="none" stroke="#2f74b5" strokeWidth="3" /><path d="M0 15h5M9 7v11" stroke="#444" strokeWidth="1.500" /><path d="M8 12h4" stroke="#d23b33" strokeWidth="2" />{bulb(14, 12, "#cfe8fb", "#4a90d0")}</> },
  { name: "Temporary hide", art: <path d="M1 3q4-1 5 4M13 4q5-4 6 2l-3 5M2 9q-1 6 5 5l4-6q-4-3-9 1zM11 12q4 4 7-2-3-3-7 0" fill="#eef5fa" stroke="#777d85" strokeWidth="1.600" /> },
  { name: "Reveal hidden", art: bulb(8, 11, "#cfe8fb", "#4a90d0") },
  { name: "Temporary properties", art: <><path d="M2 4h16v12H2z" fill="#fff" stroke="#333" strokeWidth="2" /><path d="M3 3h14M3 17h8" stroke="#333" strokeWidth="3" strokeDasharray="2 1" /><circle cx="14" cy="12" r="4" fill="#ddd" stroke="#333" strokeWidth="2" /></> },
  { name: "Analytical model", art: <><path d="M2 7l4-4h10v10l-4 4H2zM2 7h10v10M7 3v14M2 12h14" fill="#e5e5e5" stroke="#555" /><path d="M2 18v-7h6v7" fill="none" stroke="#c63a30" strokeWidth="2" />{bulb(13, 11, "#ffd777", "#e09a1a")}</> },
  { name: "Reveal constraints", art: <><path d="M1 1v17M18 1v8M1 4h17" fill="none" stroke="#555" strokeWidth="1.600" /><path d="M1 17h10" stroke="#555" strokeWidth="1.300" strokeDasharray="2 1" /><path d="M11 11h8v7h-8z" fill="#777" /><path d="M13 11V9q2-3 4 0v2" fill="none" stroke="#666" strokeWidth="1.500" /></> },
];

function ViewControlBar() {
  return (
    <div className="flex h-[22px] shrink-0 items-center border-b border-[#cbcbcb] bg-white pr-[4px] pl-[27px] font-['Noto_Sans',sans-serif] text-[13px] text-black">
      <span className="w-[65px]">1 : 100</span>
      <div className="flex gap-[5px]">
        {viewControls.map((control) => (
          <button key={control.name} aria-label={control.name}>
            <svg viewBox="0 0 20 20" className="block h-5 w-5">
              {control.art}
            </svg>
          </button>
        ))}
      </div>
      <ChevronLeft size={16} strokeWidth={3} className="ml-[4px] text-gray-600" />
      <div className="flex h-[20px] flex-1 justify-center">
        <div className="w-[21px] bg-[#cbcbcb]" />
      </div>
      <ChevronRight size={16} strokeWidth={3} className="text-gray-600" />
      <svg viewBox="0 0 12 12" className="ml-[7px] h-3 w-3 self-end">
        <path d="M8 0h3v3H8zM8 4h3v3H8zM8 8h3v3H8zM4 4h3v3H4zM4 8h3v3H4zM0 8h3v3H0z" fill="#b4b4b4" />
      </svg>
    </div>
  );
}

export default function App() {
  return (
    <div className="flex h-screen flex-col overflow-hidden bg-[#ececec] font-['Open_Sans',sans-serif] text-[15px] text-[#3a3a3a]">
      <TabStrip />
      <Ribbon />
      <main className="mt-[33px] flex min-h-0 flex-1 border-t-2 border-[#cbcbcb]">
        <aside className="-ml-2 flex w-[355px] shrink-0 flex-col border-r-2 border-[#cbcbcb] pr-[4px] text-black">
          <Properties />
          <ProjectBrowser />
        </aside>

        <div className="flex min-w-0 flex-[779] flex-col border-r-2 border-[#cbcbcb]">
          <section className="flex min-h-0 flex-[414] flex-col pb-[2px]">
            <PaneTabs title="Site" />
            <div className="mx-[2px] mt-px flex min-h-0 flex-1 flex-col border-r border-[#cbcbcb]">
              <div className="flex min-h-0 flex-1">
                <Canvas label="Site plan" origin="translate(265.5 52.5)" overlay={<NavigationBar />}>
                  <SitePlan />
                </Canvas>
                <ScrollColumn end thumb="mt-[152px]" />
              </div>
              <ViewControlBar />
            </div>
          </section>
          <section className="flex min-h-0 flex-[378] flex-col border-t-2 border-[#cbcbcb]">
            <PaneTabs title="Level 2" />
            <div className="mx-[2px] mt-px flex min-h-0 flex-1 border-r border-[#cbcbcb]">
              <Canvas label="Level 2 plan" origin="translate(456.5 136.5)" overlay={<NavigationBar />}>
                <Level2Plan />
              </Canvas>
              <ScrollColumn thumb="mt-[152px]" />
            </div>
          </section>
        </div>

        <section className="flex min-w-0 flex-[721] flex-col">
          <PaneTabs title="Level 1" active />
          <div className="flex min-h-0 flex-1">
            <Canvas
              label="Level 1 plan"
              origin="translate(239.5 181.5)"
              overlay={
                <>
                  <svg viewBox="0 0 12 20" className="absolute top-[165px] left-[76px] h-[20px] w-[12px]">
                    <path d="M.5.500v16l4-4 3 6 2-1-2.500-6h5z" fill="#fff" stroke="#111a3a" />
                  </svg>
                  <div className="absolute top-0 right-0 h-[116px] w-[2px] bg-[#b4b4b4]" />
                  <time className="absolute right-0 bottom-0 bg-black px-[5px] font-['DejaVu_Sans_Mono',monospace] text-[12px] leading-4 font-bold text-white">
                    0:00
                  </time>
                </>
              }
            >
              <Level1Plan />
            </Canvas>
          </div>
        </section>
      </main>
    </div>
  );
}
